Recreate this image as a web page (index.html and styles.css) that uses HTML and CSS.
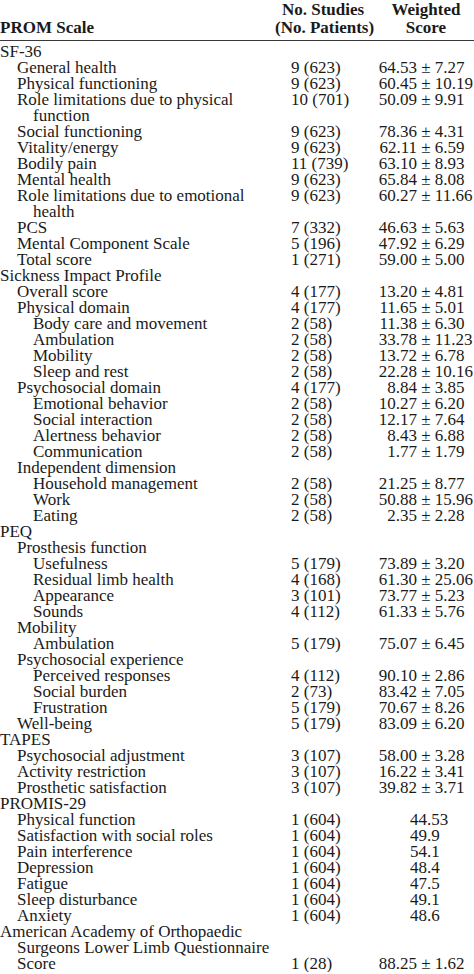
FILE: index.html
```html
<!DOCTYPE html>
<html>
<head>
<meta charset="utf-8">
<link rel="stylesheet" href="styles.css">
</head>
<body>
<table class="prom">
<colgroup><col class="c1"><col class="c2"><col class="c3"></colgroup>
<thead>
<tr><th class="h1"><br>PROM Scale</th><th class="h2">No. Studies<br>(No. Patients)</th><th class="h3">Weighted<br>Score</th></tr>
</thead>
<tbody>
<tr class="first"><td class="l0">SF-36</td><td></td><td></td></tr>
<tr><td class="l1">General health</td><td class="n">9 (623)</td><td class="s"><span class="m">64.53</span> ± 7.27</td></tr>
<tr><td class="l1">Physical functioning</td><td class="n">9 (623)</td><td class="s"><span class="m">60.45</span> ± 10.19</td></tr>
<tr><td class="l1 w">Role limitations due to physical<br>function</td><td class="n">10 (701)</td><td class="s"><span class="m">50.09</span> ± 9.91</td></tr>
<tr><td class="l1">Social functioning</td><td class="n">9 (623)</td><td class="s"><span class="m">78.36</span> ± 4.31</td></tr>
<tr><td class="l1">Vitality/energy</td><td class="n">9 (623)</td><td class="s"><span class="m">62.11</span> ± 6.59</td></tr>
<tr><td class="l1">Bodily pain</td><td class="n">11 (739)</td><td class="s"><span class="m">63.10</span> ± 8.93</td></tr>
<tr><td class="l1">Mental health</td><td class="n">9 (623)</td><td class="s"><span class="m">65.84</span> ± 8.08</td></tr>
<tr><td class="l1 w">Role limitations due to emotional<br>health</td><td class="n">9 (623)</td><td class="s"><span class="m">60.27</span> ± 11.66</td></tr>
<tr><td class="l1">PCS</td><td class="n">7 (332)</td><td class="s"><span class="m">46.63</span> ± 5.63</td></tr>
<tr><td class="l1">Mental Component Scale</td><td class="n">5 (196)</td><td class="s"><span class="m">47.92</span> ± 6.29</td></tr>
<tr><td class="l1">Total score</td><td class="n">1 (271)</td><td class="s"><span class="m">59.00</span> ± 5.00</td></tr>
<tr><td class="l0">Sickness Impact Profile</td><td></td><td></td></tr>
<tr><td class="l1">Overall score</td><td class="n">4 (177)</td><td class="s"><span class="m">13.20</span> ± 4.81</td></tr>
<tr><td class="l1">Physical domain</td><td class="n">4 (177)</td><td class="s"><span class="m">11.65</span> ± 5.01</td></tr>
<tr><td class="l2">Body care and movement</td><td class="n">2 (58)</td><td class="s"><span class="m">11.38</span> ± 6.30</td></tr>
<tr><td class="l2">Ambulation</td><td class="n">2 (58)</td><td class="s"><span class="m">33.78</span> ± 11.23</td></tr>
<tr><td class="l2">Mobility</td><td class="n">2 (58)</td><td class="s"><span class="m">13.72</span> ± 6.78</td></tr>
<tr><td class="l2">Sleep and rest</td><td class="n">2 (58)</td><td class="s"><span class="m">22.28</span> ± 10.16</td></tr>
<tr><td class="l1">Psychosocial domain</td><td class="n">4 (177)</td><td class="s"><span class="m">8.84</span> ± 3.85</td></tr>
<tr><td class="l2">Emotional behavior</td><td class="n">2 (58)</td><td class="s"><span class="m">10.27</span> ± 6.20</td></tr>
<tr><td class="l2">Social interaction</td><td class="n">2 (58)</td><td class="s"><span class="m">12.17</span> ± 7.64</td></tr>
<tr><td class="l2">Alertness behavior</td><td class="n">2 (58)</td><td class="s"><span class="m">8.43</span> ± 6.88</td></tr>
<tr><td class="l2">Communication</td><td class="n">2 (58)</td><td class="s"><span class="m">1.77</span> ± 1.79</td></tr>
<tr><td class="l1">Independent dimension</td><td></td><td></td></tr>
<tr><td class="l2">Household management</td><td class="n">2 (58)</td><td class="s"><span class="m">21.25</span> ± 8.77</td></tr>
<tr><td class="l2">Work</td><td class="n">2 (58)</td><td class="s"><span class="m">50.88</span> ± 15.96</td></tr>
<tr><td class="l2">Eating</td><td class="n">2 (58)</td><td class="s"><span class="m">2.35</span> ± 2.28</td></tr>
<tr><td class="l0">PEQ</td><td></td><td></td></tr>
<tr><td class="l1">Prosthesis function</td><td></td><td></td></tr>
<tr><td class="l2">Usefulness</td><td class="n">5 (179)</td><td class="s"><span class="m">73.89</span> ± 3.20</td></tr>
<tr><td class="l2">Residual limb health</td><td class="n">4 (168)</td><td class="s"><span class="m">61.30</span> ± 25.06</td></tr>
<tr><td class="l2">Appearance</td><td class="n">3 (101)</td><td class="s"><span class="m">73.77</span> ± 5.23</td></tr>
<tr><td class="l2">Sounds</td><td class="n">4 (112)</td><td class="s"><span class="m">61.33</span> ± 5.76</td></tr>
<tr><td class="l1">Mobility</td><td></td><td></td></tr>
<tr><td class="l2">Ambulation</td><td class="n">5 (179)</td><td class="s"><span class="m">75.07</span> ± 6.45</td></tr>
<tr><td class="l1">Psychosocial experience</td><td></td><td></td></tr>
<tr><td class="l2">Perceived responses</td><td class="n">4 (112)</td><td class="s"><span class="m">90.10</span> ± 2.86</td></tr>
<tr><td class="l2">Social burden</td><td class="n">2 (73)</td><td class="s"><span class="m">83.42</span> ± 7.05</td></tr>
<tr><td class="l2">Frustration</td><td class="n">5 (179)</td><td class="s"><span class="m">70.67</span> ± 8.26</td></tr>
<tr><td class="l1">Well-being</td><td class="n">5 (179)</td><td class="s"><span class="m">83.09</span> ± 6.20</td></tr>
<tr><td class="l0">TAPES</td><td></td><td></td></tr>
<tr><td class="l1">Psychosocial adjustment</td><td class="n">3 (107)</td><td class="s"><span class="m">58.00</span> ± 3.28</td></tr>
<tr><td class="l1">Activity restriction</td><td class="n">3 (107)</td><td class="s"><span class="m">16.22</span> ± 3.41</td></tr>
<tr><td class="l1">Prosthetic satisfaction</td><td class="n">3 (107)</td><td class="s"><span class="m">39.82</span> ± 3.71</td></tr>
<tr><td class="l0">PROMIS-29</td><td></td><td></td></tr>
<tr><td class="l1">Physical function</td><td class="n">1 (604)</td><td class="s"><span class="solo">44.53</span></td></tr>
<tr><td class="l1">Satisfaction with social roles</td><td class="n">1 (604)</td><td class="s"><span class="solo">49.9</span></td></tr>
<tr><td class="l1">Pain interference</td><td class="n">1 (604)</td><td class="s"><span class="solo">54.1</span></td></tr>
<tr><td class="l1">Depression</td><td class="n">1 (604)</td><td class="s"><span class="solo">48.4</span></td></tr>
<tr><td class="l1">Fatigue</td><td class="n">1 (604)</td><td class="s"><span class="solo">47.5</span></td></tr>
<tr><td class="l1">Sleep disturbance</td><td class="n">1 (604)</td><td class="s"><span class="solo">49.1</span></td></tr>
<tr><td class="l1">Anxiety</td><td class="n">1 (604)</td><td class="s"><span class="solo">48.6</span></td></tr>
<tr class="bottom"><td class="l0 w">American Academy of Orthopaedic<br>Surgeons Lower Limb Questionnaire<br>Score</td><td class="n">1 (28)</td><td class="s"><span class="m">88.25</span> ± 1.62</td></tr>
</tbody>
</table>
</body>
</html>
```
FILE: styles.css
```css
html, body {
  margin: 0;
  padding: 0;
  background: #ffffff;
  overflow: hidden;
}
body {
  font-family: "Liberation Serif", "Times New Roman", serif;
  font-size: 17px;
  color: #1a1a1a;
}
.prom {
  border-collapse: collapse;
  table-layout: fixed;
  width: 481px;
}
.c1 { width: 275px; }
.c2 { width: 96px; }
.c3 { width: 110px; }
.prom th {
  font-weight: bold;
  line-height: 18px;
  padding: 1px 0 3px 0;
  border-bottom: 1px solid #3a3a3a;
  vertical-align: bottom;
  white-space: nowrap;
}
.h1 { text-align: left; padding-left: 0; }
.h2 { text-align: center; }
.h3 { text-align: center; }
.prom td {
  padding: 0;
  line-height: 16px;
  vertical-align: top;
  white-space: nowrap;
}
.prom tr.first td { padding-top: 3px; }
.prom tr.bottom td { vertical-align: bottom; }
.prom td.l0 { padding-left: 0; }
.prom td.l1 { padding-left: 17px; }
.prom td.l2 { padding-left: 33px; }
.prom td.l1.w { padding-left: 33px; text-indent: -16px; }
.prom td.l0.w { padding-left: 17px; text-indent: -17px; }
.prom td.n { padding-left: 16px; }
.prom td.s { padding-left: 7px; }
.m {
  display: inline-block;
  width: 39px;
  text-align: right;
}
.solo {
  display: inline-block;
  padding-left: 32px;
}
```
